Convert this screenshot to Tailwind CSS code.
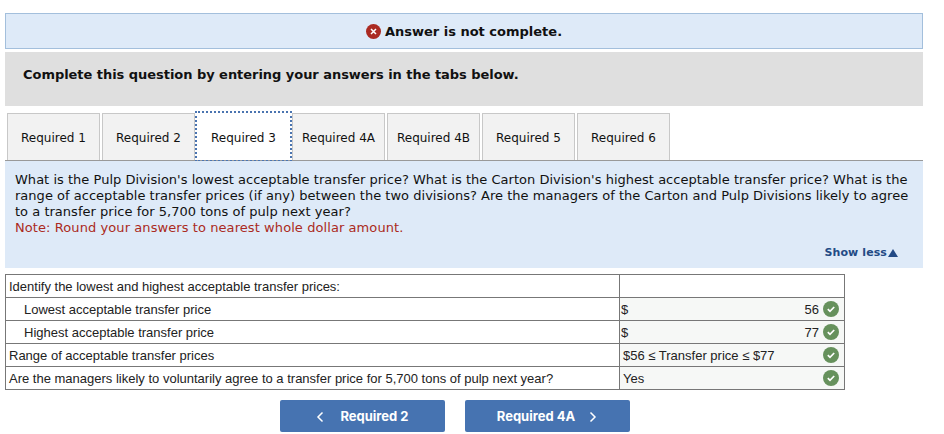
<!DOCTYPE html>
<html lang="en">
<head>
  <meta charset="UTF-8" />
  <title>Answer is not complete</title>
  <script src="https://cdn.jsdelivr.net/npm/@tailwindcss/browser@4"></script>
</head>
<body class="bg-white h-[434px] overflow-hidden font-['DejaVu_Sans',sans-serif] text-[#111]">

<div class="w-[918px] ml-[5px] pt-[13px]">

  <!-- Banner -->
  <div class="h-[36px] bg-[#deeaf8] border border-[#a3bfdc] flex items-center justify-center gap-[4px] font-bold text-[13px]">
    <svg width="15" height="15" viewBox="0 0 15 15"><circle cx="7.5" cy="7.5" r="7.5" fill="#ab2a22"/><path d="M5 5l5 5M10 5l-5 5" stroke="#fff" stroke-width="1.5" fill="none"/></svg>
    <span class="pt-[1px]">Answer is not complete.</span>
  </div>

  <div class="h-[54px] mt-[3px] bg-[#dfdfdf] pl-[18px] pt-[14px] font-bold text-[13px] leading-[18px] tracking-[-0.04px]">Complete this question by entering your answers in the tabs below.</div>

  <!-- Tabs -->
  <div class="flex gap-[2px] h-[48px] mt-[7px] pl-[2px] border-b border-[#999] text-[12px]">
    <div class="w-[93px] h-[47px] pt-[2px] bg-[#f2f2f2] border border-[#c8c8c8] border-b-0 flex items-center justify-center">Required 1</div>
    <div class="w-[93px] h-[47px] pt-[2px] bg-[#f2f2f2] border border-[#c8c8c8] border-b-0 flex items-center justify-center">Required 2</div>
    <div class="w-[93px] h-[47px] pt-[2px] bg-white flex items-center justify-center outline-2 outline-dotted outline-[#4a74b0]">Required 3</div>
    <div class="w-[93px] h-[47px] pt-[2px] bg-[#f2f2f2] border border-[#c8c8c8] border-b-0 flex items-center justify-center">Required 4A</div>
    <div class="w-[93px] h-[47px] pt-[2px] bg-[#f2f2f2] border border-[#c8c8c8] border-b-0 flex items-center justify-center">Required 4B</div>
    <div class="w-[93px] h-[47px] pt-[2px] bg-[#f2f2f2] border border-[#c8c8c8] border-b-0 flex items-center justify-center">Required 5</div>
    <div class="w-[93px] h-[47px] pt-[2px] bg-[#f2f2f2] border border-[#c8c8c8] border-b-0 flex items-center justify-center">Required 6</div>
  </div>

  <!-- Question -->
  <div class="h-[107px] bg-[#deeaf8] px-[10px] pt-[11px] text-[13px] leading-[16px] tracking-[0.02px] relative">
    <p class="w-[900px]">What is the Pulp Division's lowest acceptable transfer price? What is the Carton Division's highest acceptable transfer price? What is the range of acceptable transfer prices (if any) between the two divisions? Are the managers of the Carton and Pulp Divisions likely to agree to a transfer price for 5,700 tons of pulp next year?</p>
    <p class="text-[#ab2a22] tracking-[0.08px]">Note: Round your answers to nearest whole dollar amount.</p>
    <div class="absolute right-[25px] top-[85px] flex items-center gap-[1px] text-[11px] leading-[14px] font-bold text-[#234a85] tracking-[0.1px]">
      <span>Show less</span>
      <svg width="10" height="8" viewBox="0 0 10 8"><path d="M5 0l5 8H0z" fill="#234a85"/></svg>
    </div>
  </div>

  <!-- Table -->
  <table class="w-[840px] mt-[6px] border-collapse table-fixed font-['Liberation_Sans',sans-serif] text-[13px] text-[#222]">
    <tbody>
      <tr class="h-[23px]">
        <td class="border border-[#777] pl-[3px] pt-[1px] pb-0">Identify the lowest and highest acceptable transfer prices:</td>
        <td class="w-[225px] border border-[#777] p-0"></td>
      </tr>
      <tr class="h-[23px]">
        <td class="border border-[#777] pl-[18px] pt-[1px] pb-0">Lowest acceptable transfer price</td>
        <td class="border border-[#777] bg-[#f6f8f6] p-0">
          <div class="flex items-center pl-[1px] pr-[5px]"><span class="pt-[1px]">$</span><span class="ml-auto mr-[4px] pt-[1px]">56</span>
            <svg class="w-[16px] h-[16px]" viewBox="0 0 16 16"><circle cx="8" cy="8" r="8" fill="#66915c"/><path d="M4.8 8.2l2.2 2.2 4.2-4.4" stroke="#fff" stroke-width="1.7" fill="none"/></svg></div>
        </td>
      </tr>
      <tr class="h-[23px]">
        <td class="border border-[#777] pl-[18px] pt-[1px] pb-0">Highest acceptable transfer price</td>
        <td class="border border-[#777] bg-[#f6f8f6] p-0">
          <div class="flex items-center pl-[1px] pr-[5px]"><span class="pt-[1px]">$</span><span class="ml-auto mr-[4px] pt-[1px]">77</span>
            <svg class="w-[16px] h-[16px]" viewBox="0 0 16 16"><circle cx="8" cy="8" r="8" fill="#66915c"/><path d="M4.8 8.2l2.2 2.2 4.2-4.4" stroke="#fff" stroke-width="1.7" fill="none"/></svg></div>
        </td>
      </tr>
      <tr class="h-[23px]">
        <td class="border border-[#777] pl-[3px] pt-[1px] pb-0">Range of acceptable transfer prices</td>
        <td class="border border-[#777] bg-[#f6f8f6] p-0">
          <div class="flex items-center pl-[3px] pr-[5px]"><span class="pt-[1px]">$56 ≤ Transfer price ≤ $77</span>
            <svg class="ml-auto w-[16px] h-[16px]" viewBox="0 0 16 16"><circle cx="8" cy="8" r="8" fill="#66915c"/><path d="M4.8 8.2l2.2 2.2 4.2-4.4" stroke="#fff" stroke-width="1.7" fill="none"/></svg></div>
        </td>
      </tr>
      <tr class="h-[23px]">
        <td class="border border-[#777] pl-[3px] pt-[1px] pb-0">Are the managers likely to voluntarily agree to a transfer price for 5,700 tons of pulp next year?</td>
        <td class="border border-[#777] bg-[#f6f8f6] p-0">
          <div class="flex items-center pl-[3px] pr-[5px]"><span class="pt-[1px]">Yes</span>
            <svg class="ml-auto w-[16px] h-[16px]" viewBox="0 0 16 16"><circle cx="8" cy="8" r="8" fill="#66915c"/><path d="M4.8 8.2l2.2 2.2 4.2-4.4" stroke="#fff" stroke-width="1.7" fill="none"/></svg></div>
        </td>
      </tr>
    </tbody>
  </table>

  <!-- Nav buttons -->
  <div class="flex gap-[20px] mt-[10px] ml-[275px] font-['Inter',sans-serif] font-bold text-[13px] text-white">
    <button class="w-[165px] h-[32px] pt-[1px] bg-[#4673b1] rounded-[2px] flex items-center justify-center gap-[16px]">
      <svg width="8" height="12" viewBox="0 0 8 12"><path d="M6.5 1.5L2 6l4.5 4.5" stroke="#fff" stroke-width="1.5" fill="none"/></svg>
      <span>Required 2</span>
    </button>
    <button class="w-[165px] h-[32px] pt-[1px] pr-[1px] bg-[#4673b1] rounded-[2px] flex items-center justify-center gap-[14px]">
      <span>Required 4A</span>
      <svg width="8" height="12" viewBox="0 0 8 12"><path d="M1.5 1.5L6 6l-4.5 4.5" stroke="#fff" stroke-width="1.5" fill="none"/></svg>
    </button>
  </div>
</div>

</body>
</html>
